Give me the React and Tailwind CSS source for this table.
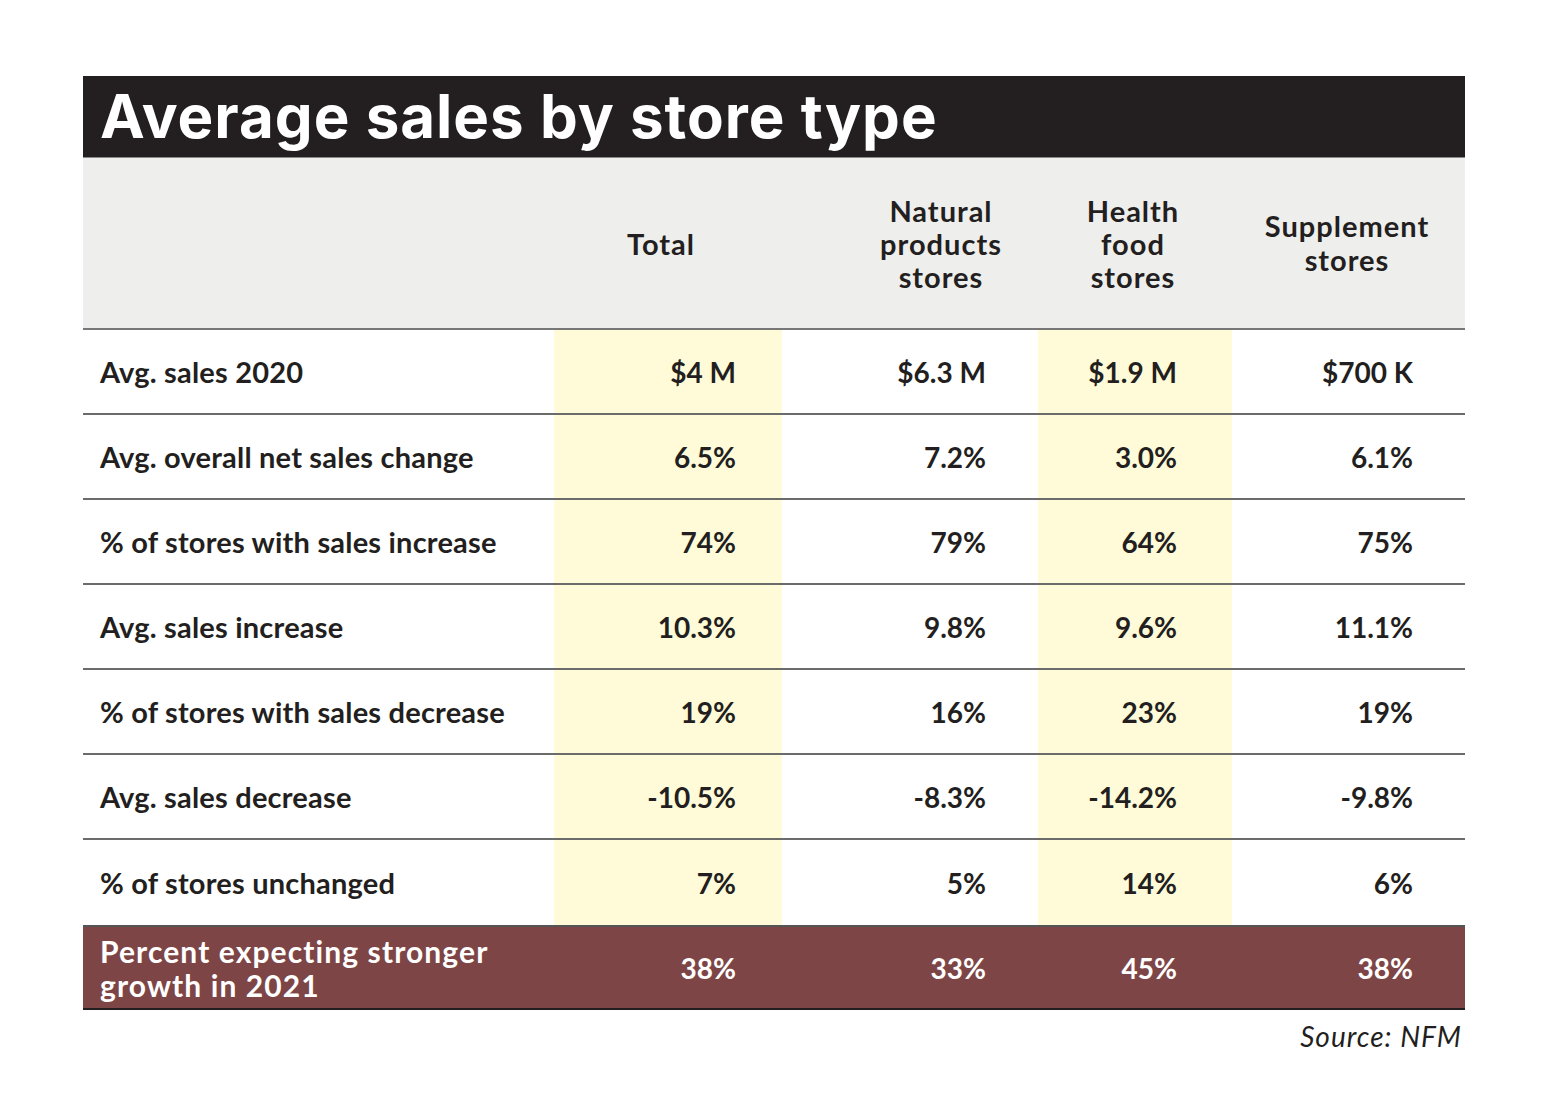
import React from "react";

const rows = [
  ["Avg. sales 2020", "$4 M", "$6.3 M", "$1.9 M", "$700 K"],
  ["Avg. overall net sales change", "6.5%", "7.2%", "3.0%", "6.1%"],
  ["% of stores with sales increase", "74%", "79%", "64%", "75%"],
  ["Avg. sales increase", "10.3%", "9.8%", "9.6%", "11.1%"],
  ["% of stores with sales decrease", "19%", "16%", "23%", "19%"],
  ["Avg. sales decrease", "-10.5%", "-8.3%", "-14.2%", "-9.8%"],
  ["% of stores unchanged", "7%", "5%", "14%", "6%"],
];

const grid = "grid grid-cols-[471px_228px_256px_194px_233px]";

export default function App() {
  return (
    <div className="min-h-[1094px] w-[1546px] bg-white pt-[76px] pl-[83px] text-[#231f20]" style={{ fontFamily: "Lato, 'Open Sans', sans-serif" }}>
      <div className="w-[1382px]">
        <div className="h-[82px] bg-[#231f20] border-b border-[#8a8a8a] flex items-center pl-[17px]">
          <h1 className="text-white text-[60px] font-bold leading-none tracking-[1px] pb-[2px]" style={{ fontFamily: "Inter, sans-serif" }}>
            Average sales by store type
          </h1>
        </div>
        <div className={`${grid} h-[172px] bg-[#eeeeec] border-b-2 border-[#777777] text-[29px] font-bold leading-[33px] tracking-[1px] text-center`}>
          <div />
          <div className="flex items-center justify-center pr-[14px]">Total</div>
          <div className="flex items-center justify-center pl-[62px]">Natural<br />products<br />stores</div>
          <div className="flex items-center justify-center pr-[4px]">Health<br />food<br />stores</div>
          <div className="flex items-center justify-center pr-[3px] leading-[34px]">Supplement<br />stores</div>
        </div>
        {rows.map((r, i) => (
          <div key={i} className={`${grid} h-[85px] text-[28px] font-bold ${i < rows.length - 1 ? "border-b-2 border-[#6b6b6b]" : ""}`}>
            <div className="flex items-center pl-[17px] text-[29px] tracking-[0.2px]">{r[0]}</div>
            <div className="flex items-center justify-end pr-[46px] bg-[#fffbd9]">{r[1]}</div>
            <div className="flex items-center justify-end pr-[52px]">{r[2]}</div>
            <div className="flex items-center justify-end pr-[55px] bg-[#fffbd9]">{r[3]}</div>
            <div className="flex items-center justify-end pr-[52px]">{r[4]}</div>
          </div>
        ))}
        <div className={`${grid} h-[85px] bg-[#7e4546] border-t-2 border-[#555] border-b-2 border-b-[#231f20] text-white text-[28px] font-bold`}>
          <div className="flex items-center pl-[17px] leading-[34px] text-[30px] tracking-[1.1px]">Percent expecting stronger<br />growth in 2021</div>
          <div className="flex items-center justify-end pr-[46px]">38%</div>
          <div className="flex items-center justify-end pr-[52px]">33%</div>
          <div className="flex items-center justify-end pr-[55px]">45%</div>
          <div className="flex items-center justify-end pr-[52px]">38%</div>
        </div>
        <div className="text-right pr-[3px] pt-[5px] text-[28px] italic tracking-[1px]">Source: NFM</div>
      </div>
    </div>
  );
}
